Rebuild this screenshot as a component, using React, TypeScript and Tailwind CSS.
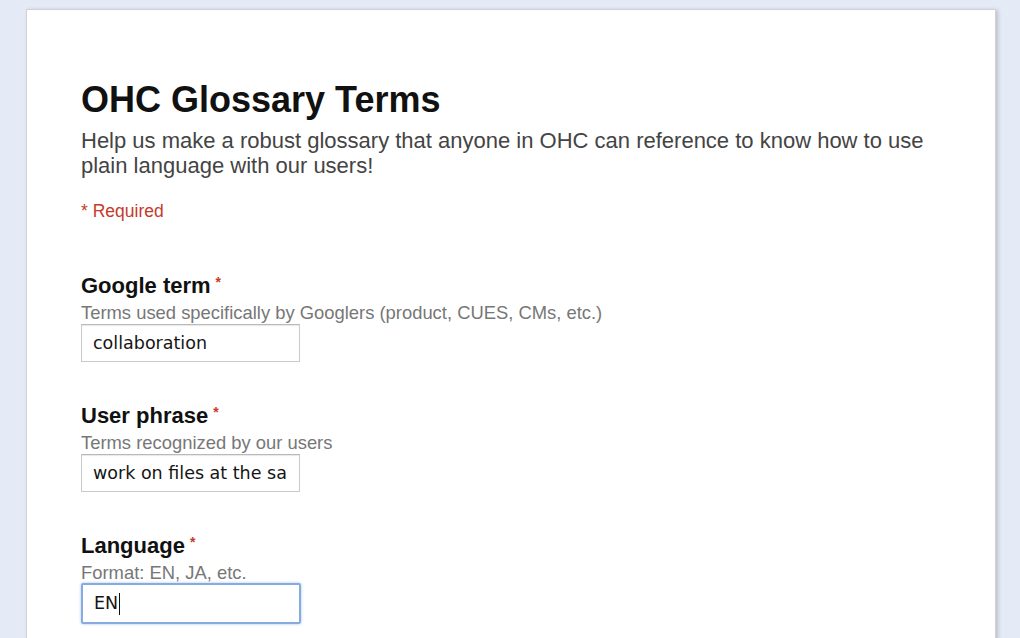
const fields = [
  {
    label: "Google term",
    help: "Terms used specifically by Googlers (product, CUES, CMs, etc.)",
    value: "collaboration",
    focused: false,
  },
  {
    label: "User phrase",
    help: "Terms recognized by our users",
    value: "work on files at the sa",
    focused: false,
  },
  {
    label: "Language",
    help: "Format: EN, JA, etc.",
    value: "EN",
    focused: true,
  },
];

const Field = ({ label, help, value, focused }: (typeof fields)[number]) => {
  return (
    <div className="flex flex-col">
      <div className="flex items-start text-[22px] leading-[26px] font-bold text-[#111]">
        {label}
        <span className="ml-[5px] mt-[1px] text-[14px] leading-[16px] text-[#c43b2b]">*</span>
      </div>
      <div className="mt-[3px] text-[18.4px] leading-[22px] text-[#777]">{help}</div>
      <div
        className={
          focused
            ? "-mt-[1px] w-[220px] h-[41px] border-2 border-[#86abdf] rounded-[2px] flex items-center px-[11px] shadow-[0_0_3px_#a9c4ec]"
            : "w-[219px] h-[38px] border border-[#cacaca] border-t-[#b9b9b9] flex items-center px-[11px] shadow-[inset_0_1px_1px_#e8e8e8]"
        }
      >
        <span className="font-['DejaVu_Sans',sans-serif] text-[17.5px] text-[#151515] whitespace-nowrap overflow-hidden">
          {value}
        </span>
        {focused && <span className="w-px h-[22px] bg-[#111] ml-[1px]" />}
      </div>
    </div>
  );
};

const App = () => {
  return (
    <div className="w-[1020px] h-[638px] overflow-hidden bg-[#e4eaf6] font-['Liberation_Sans',Arial,sans-serif]">
      <div className="ml-[26px] mt-[9px] w-[970px] h-[700px] bg-white border border-[#cfd1d6] shadow-[2px_1px_4px_rgba(0,0,0,0.18)] pl-[54px] pt-[70px]">
        <h1 className="text-[36px] leading-[40px] font-bold text-[#111]">OHC Glossary Terms</h1>
        <p className="mt-[8px] text-[22px] leading-[25px] text-[#444] w-[870px]">
          Help us make a robust glossary that anyone in OHC can reference to know how to use plain language with our users!
        </p>
        <div className="mt-[23px] text-[17.5px] leading-[20px] text-[#c43b2b]">* Required</div>

        <div className="mt-[52px] flex flex-col gap-[41px]">
          {fields.map((f) => (
            <Field key={f.label} {...f} />
          ))}
        </div>
      </div>
    </div>
  );
};

export default App;
